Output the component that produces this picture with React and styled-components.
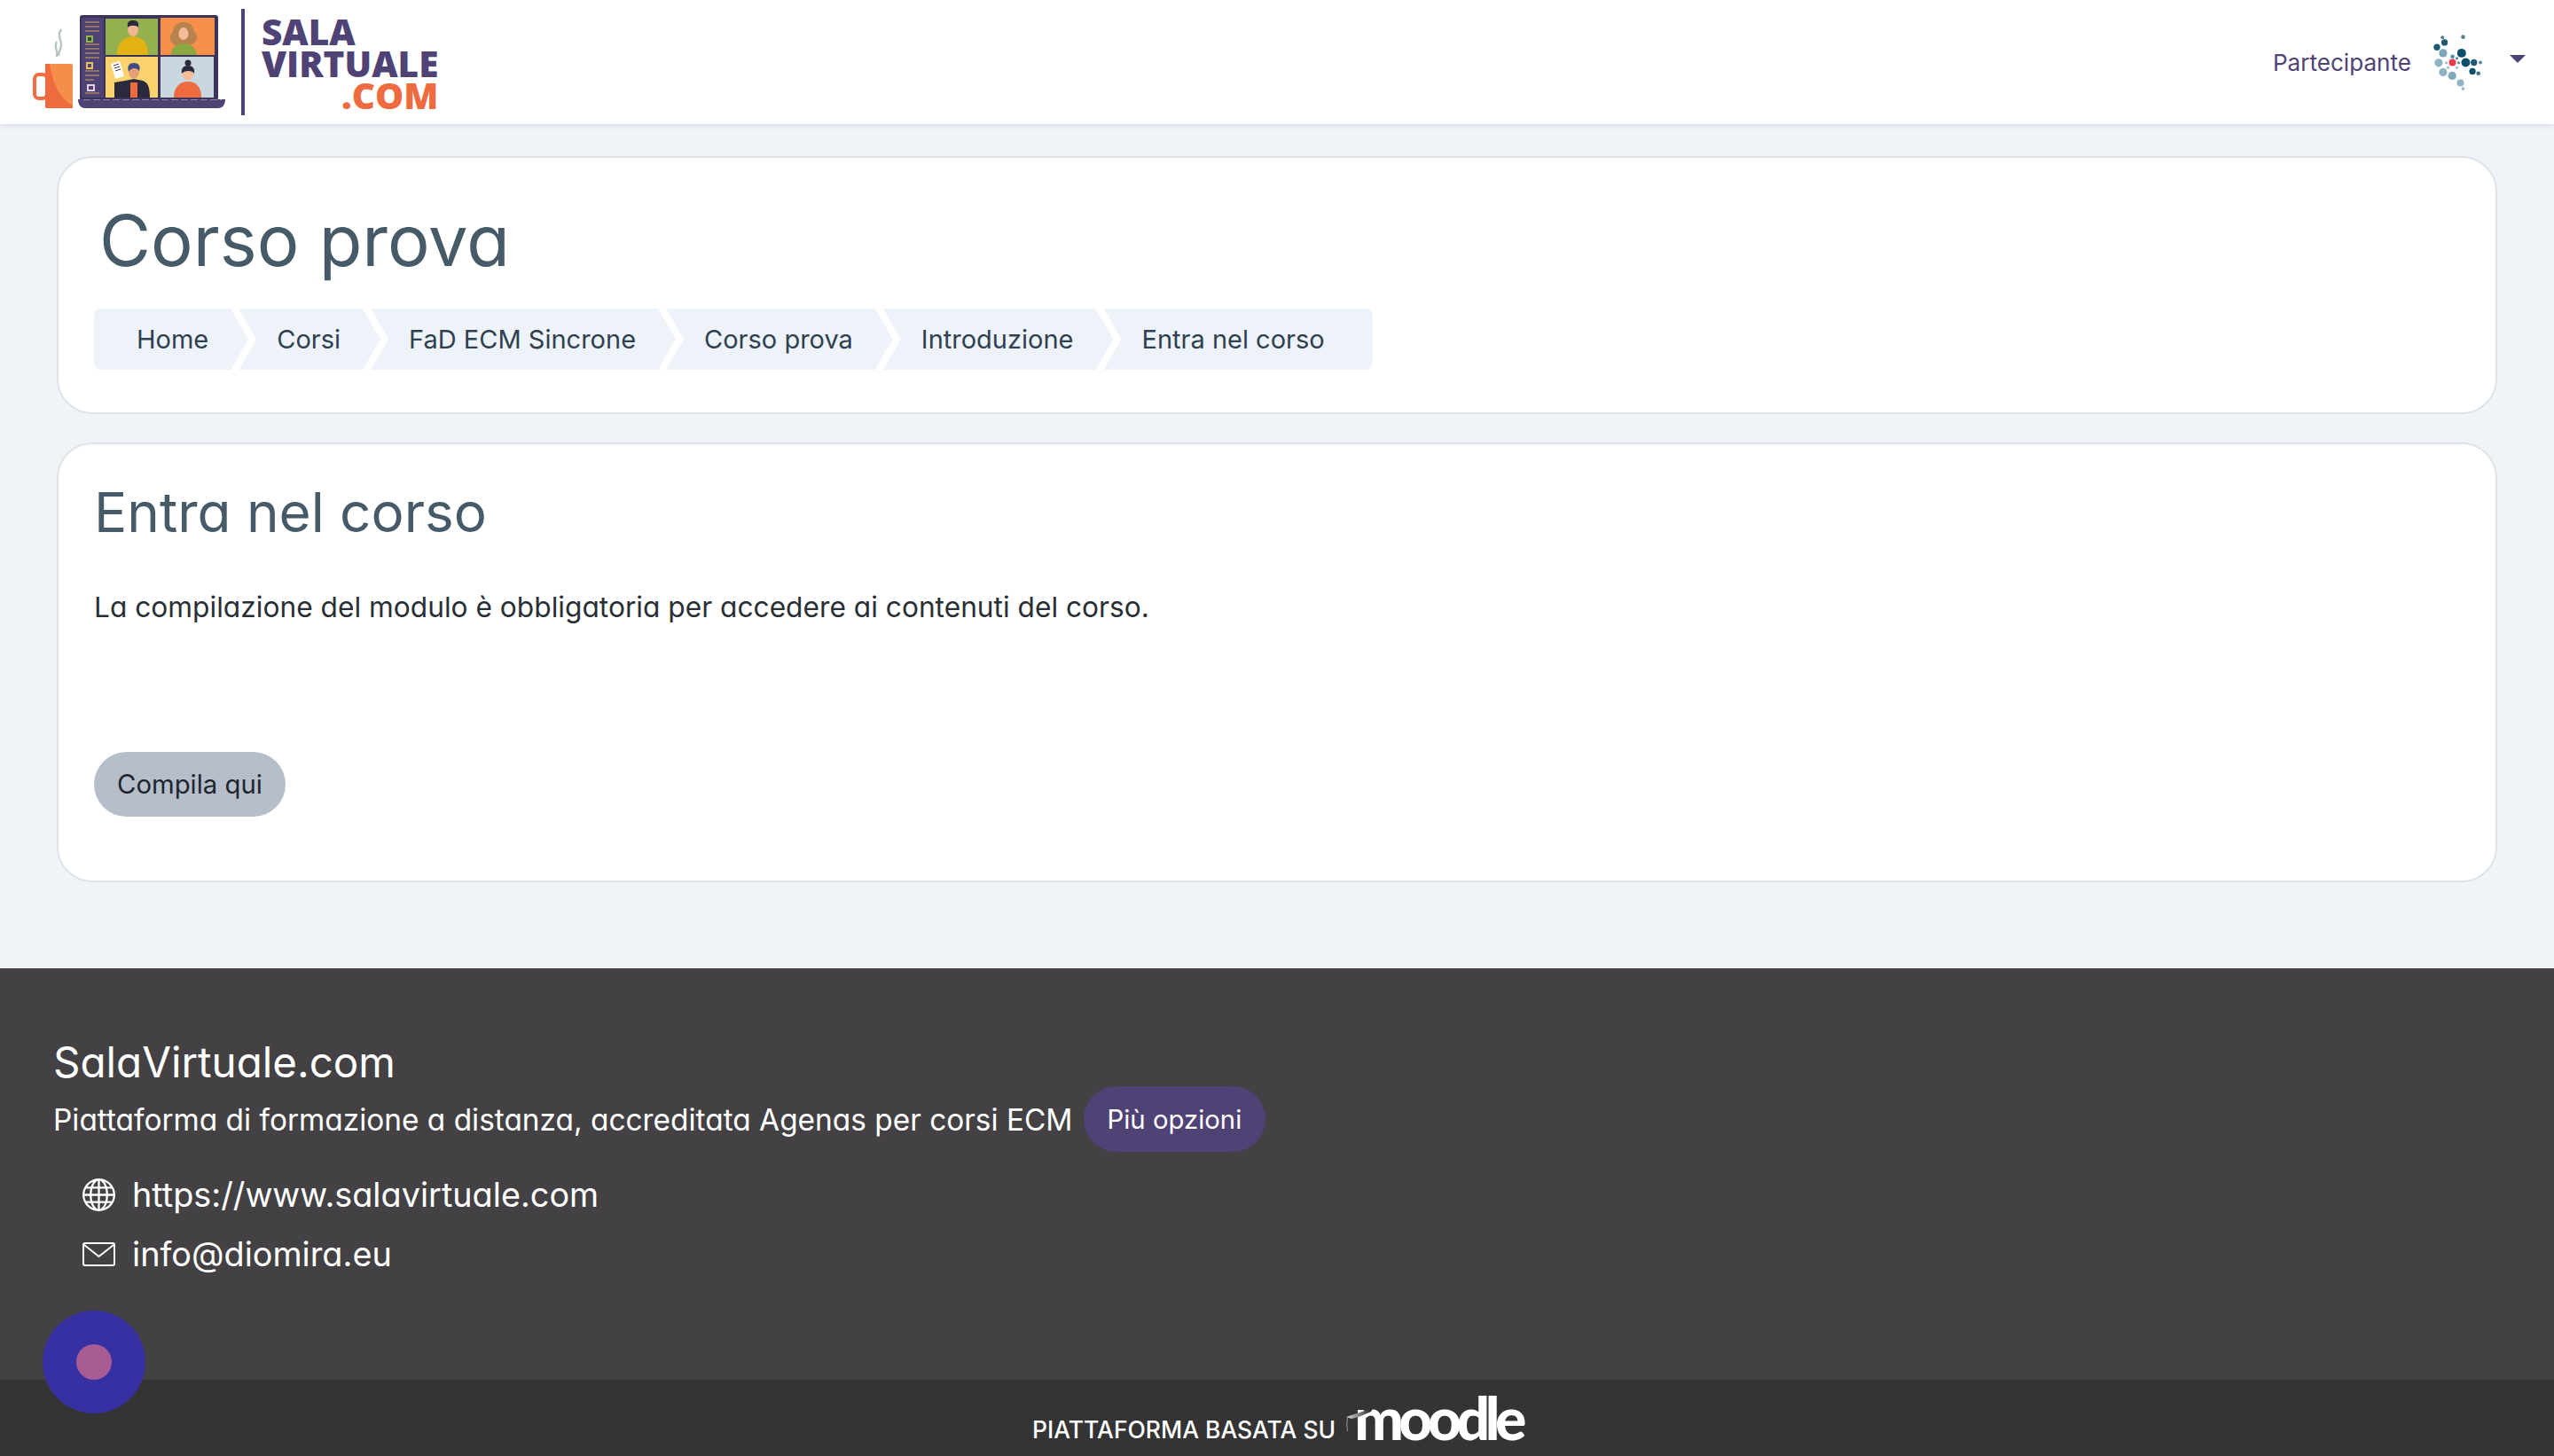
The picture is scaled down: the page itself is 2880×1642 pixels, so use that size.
import React from 'react'
import styled, { createGlobalStyle } from 'styled-components'
import { BsGlobe } from 'react-icons/bs'

const GlobalStyle = createGlobalStyle`
    * { box-sizing: border-box; }
    html, body { margin: 0; padding: 0; }
    body {
        background: #f0f4f8;
        font-family: Inter, "Noto Sans", "Liberation Sans", sans-serif;
        font-feature-settings: "cv11";
    }
`;

const Page = styled.div`
    position: relative;
    display: flex;
    flex-direction: column;
    height: 1642px;
    overflow: hidden;
`;

const Header = styled.header`
    display: flex;
    align-items: center;
    justify-content: space-between;
    flex: none;
    height: 140px;
    padding: 0 32px 0 20px;
    background: #fff;
    box-shadow: 0 2px 6px rgba(60, 70, 80, 0.12);
`;

const Brand = styled.div`
    display: flex;
    align-items: center;
`;

const Divider = styled.div`
    width: 4px;
    height: 120px;
    margin-left: 2px;
    background: #4f4274;
`;

const BrandText = styled.div`
    display: flex;
    flex-direction: column;
    align-items: flex-end;
    margin: 3px 0 0 19px;
    font-family: "Open Sans", sans-serif;
    font-feature-settings: normal;
    font-size: 40.5px;
    font-weight: 800;
    line-height: 36px;
    color: #4f4274;
`;

const BrandSala = styled.span`
    align-self: flex-start;
`;

const BrandCom = styled.span`
    color: #ee6a3f;
`;

const UserMenu = styled.div`
    display: flex;
    align-items: center;
`;

const UserName = styled.span`
    margin-right: 21px;
    font-size: 26.1px;
    font-feature-settings: normal;
    color: #4f4274;
`;

const Caret = styled.span`
    margin-left: 27px;
    margin-bottom: 8px;
    border-left: 9px solid transparent;
    border-right: 9px solid transparent;
    border-top: 9px solid #4f4274;
`;

const Main = styled.main`
    display: flex;
    flex-direction: column;
    gap: 32px;
    flex: none;
    height: 952px;
    padding: 36px 64px 0;
`;

const Card = styled.section`
    background: #fff;
    border: 2px solid #dfe4e9;
    border-radius: 40px;
    padding: ${({ $pad }) => $pad};
`;

const Title = styled.h1`
    margin: 0 0 35px 6px;
    font-size: 79.5px;
    font-weight: 400;
    line-height: 84px;
    color: #465a68;
`;

const Crumbs = styled.nav`
    display: flex;
    width: fit-content;
    height: 69px;
    border-radius: 8px;
    overflow: hidden;
`;

const Crumb = styled.span`
    display: flex;
    align-items: center;
    padding: 0 ${({ $last }) => ($last ? 54 : 45)}px 0 ${({ $first }) => ($first ? 48 : 43)}px;
    margin-left: ${({ $first }) => ($first ? 0 : -11)}px;
    background: #edf3f9;
    font-size: 29px;
    font-feature-settings: normal;
    color: #2f4050;
    clip-path: ${({ $first, $last }) => {
        if ($first) return 'polygon(0 0, calc(100% - 20px) 0, 100% 50%, calc(100% - 20px) 100%, 0 100%)'
        if ($last) return 'polygon(0 0, 100% 0, 100% 100%, 0 100%, 20px 50%)'
        return 'polygon(0 0, calc(100% - 20px) 0, 100% 50%, calc(100% - 20px) 100%, 0 100%, 20px 50%)'
    }};
`;

const Heading = styled.h2`
    margin: 0 0 48px;
    font-size: 62px;
    font-weight: 400;
    line-height: 72px;
    color: #465a68;
`;

const Lead = styled.p`
    margin: 0 0 141px;
    font-size: 31.7px;
    line-height: 45px;
    color: #2a2f36;
`;

const PillButton = styled.button`
    display: block;
    height: ${({ $height }) => $height}px;
    padding: 0 ${({ $pad }) => $pad}px;
    border: 0;
    border-radius: 40px;
    background: ${({ $bg }) => $bg};
    color: ${({ $fg }) => $fg};
    font-family: inherit;
    font-feature-settings: normal;
    font-size: 29.3px;
    white-space: nowrap;
`;

const Footer = styled.footer`
    flex: 1;
    padding: 83px 60px 0;
    background: #434143;
    color: #fff;
`;

const FooterTitle = styled.div`
    font-size: 47.5px;
    line-height: 46px;
`;

const FooterRow = styled.div`
    display: flex;
    align-items: center;
    gap: 12px;
    margin-top: 4px;
    font-size: 33.4px;
    line-height: 44px;
`;

const FooterLine = styled.span`
    padding-top: 2px;
`;

const ContactList = styled.div`
    display: flex;
    flex-direction: column;
    gap: 17px;
    margin-top: 23px;
    padding-left: 33px;
`;

const Contact = styled.div`
    display: flex;
    align-items: center;
    gap: 19px;
    height: 50px;
    font-size: 37.8px;
    svg { flex: none; }
`;

const BottomBar = styled.div`
    display: flex;
    align-items: center;
    justify-content: center;
    flex: none;
    height: 86px;
    background: #343434;
    color: #fff;
`;

const BarText = styled.span`
    margin-top: 26px;
    font-size: 26.5px;
    font-weight: 500;
`;

const MoodleMark = styled.span`
    position: relative;
    margin-left: 21px;
    font-family: Lato, Inter, sans-serif;
    font-size: 66px;
    font-weight: 900;
    line-height: 1;
    letter-spacing: -5.5px;
    font-feature-settings: normal;
    svg {
        position: absolute;
        left: -9px;
        top: 22px;
    }
`;

const ChatBubble = styled.div`
    position: absolute;
    left: 48px;
    top: 1478px;
    display: flex;
    align-items: center;
    justify-content: center;
    width: 116px;
    height: 116px;
    border-radius: 50%;
    background: #3730a3;
`;

const ChatDot = styled.span`
    width: 40px;
    height: 40px;
    border-radius: 50%;
    background: #a85c94;
`;

const LogoArt = () => (
    <svg width="250" height="140" viewBox="0 0 250 140">
        <g fill="none" stroke="#b9c2c4" strokeWidth="2.4">
            <path d="M49 33c-6 9 3 13-1 22-1 3-2 5-2 8" />
            <path d="M44 47c-4 6 2 9 0 17" />
        </g>
        <rect x="19" y="84" width="14" height="27" rx="5" fill="none" stroke="#ef6f45" strokeWidth="4" />
        <rect x="31" y="72" width="31" height="50" rx="2" fill="#f58e4a" />
        <path d="M31 72h5c3 22 12 40 26 47v3H33a2 2 0 0 1-2-2z" fill="#ee6a3f" />
        <rect x="70" y="17" width="156" height="96" rx="3" fill="#3b3358" />
        <rect x="72" y="20" width="25" height="90" fill="#4f4274" />
        <g stroke="#a8875f" strokeWidth="1.5">
            <path d="M76 25h16M76 30h16M76 35h16M76 50h16M76 55h16M76 60h16M76 65h16M76 80h16M76 85h16M76 90h10M76 105h16" />
        </g>
        <rect x="78" y="41" width="6" height="6" fill="#2f4a3a" stroke="#95b04f" strokeWidth="2" />
        <rect x="78" y="71" width="6" height="6" fill="#4f4274" stroke="#e7c45f" strokeWidth="2" />
        <rect x="79" y="96" width="7" height="6" fill="#4f4274" stroke="#e5cfe2" strokeWidth="2" />

        <rect x="99" y="21" width="59" height="41" fill="#95b04f" />
        <path d="M112 62c0-13 6-20 18-21 12 1 17 8 17 21z" fill="#e4b313" />
        <ellipse cx="130" cy="33" rx="6" ry="8" fill="#f0b78f" />
        <path d="M124 31c-1-7 2-8 6-8s7 1 6 8c-2-3-9-3-12 0z" fill="#2b2a3d" />

        <rect x="161" y="20" width="61" height="42" fill="#f58f49" />
        <path d="M187 25c8 0 11 5 12 11 5 4 4 10-1 13-3 3-20 5-22 1-5-3-6-10-1-14 0-6 5-11 12-11z" fill="#b8824e" />
        <ellipse cx="187" cy="38" rx="5.5" ry="7" fill="#f3bd9a" />
        <path d="M173 62c0-8 6-13 14-13s14 5 15 13z" fill="#8aa83f" />

        <rect x="99" y="64" width="59" height="46" fill="#fbd36d" />
        <path d="M109 110V93l12-2 10-2 10 2c6 2 8 8 8 19z" fill="#2b2a3d" />
        <rect x="127" y="93" width="8" height="17" fill="#ee6a3f" />
        <ellipse cx="131" cy="81" rx="6" ry="7.5" fill="#e59f76" />
        <path d="M125 81c-2-7 1-10 6-10s8 3 6 9c-3-4-9-4-12 1z" fill="#3e4a80" />
        <path d="M105 72l10-3 5 17-10 3z" fill="#fff" />
        <path d="M108 74l6-2M109 77l6-2M110 80l6-2" stroke="#3b3358" strokeWidth="1" />

        <rect x="161" y="64" width="60" height="46" fill="#c9d7de" />
        <path d="M176 110c0-11 6-18 16-18s15 7 15 18z" fill="#ee6a3f" />
        <ellipse cx="192" cy="83" rx="6.5" ry="7.5" fill="#f3bd9a" />
        <path d="M185 83c-1-6 2-9 7-9s8 3 7 9c-2-4-11-4-14 0z" fill="#2b2a3d" />
        <circle cx="192" cy="71" r="3.5" fill="#2b2a3d" />

        <path d="M68 112h166c0 6-3 10-8 10H76c-5 0-8-4-8-10z" fill="#4f4274" />
        <path d="M74 112.5h156" stroke="#8c85a8" strokeWidth="1" strokeDasharray="8 3" />
    </svg>
)

const avatarDots = [
    [703, 130, 6, '#5b7f8e'], [710, 147, 11, '#1f5a74'], [773, 128, 7, '#5b7f8e'], [684, 163, 11, '#1f5a74'],
    [705, 183, 14, '#7fa9bb'], [768, 183, 15, '#0f4f6e'], [737, 195, 7, '#5b8ca3'], [752, 201, 5, '#5b8ca3'],
    [690, 216, 14, '#8fb4c3'], [716, 216, 5, '#a2c1cd'], [758, 216, 5, '#5b8ca3'], [782, 215, 15, '#0f4f6e'],
    [810, 215, 11, '#1f5a74'], [832, 215, 6, '#5b8ca3'], [722, 232, 5, '#a2c1cd'], [752, 232, 5, '#a2c1cd'],
    [705, 248, 14, '#8fb4c3'], [736, 260, 14, '#7fa9bb'], [805, 245, 11, '#0f4f6e'], [825, 252, 7, '#3a6f86'],
    [764, 284, 12, '#8fb4c3'], [773, 304, 6, '#a2c1cd'], [737, 215, 12, '#ee3a48'],
]

const Avatar = () => (
    <svg width="63" height="67" viewBox="660 115 190 200">
        {avatarDots.map(([cx, cy, r, fill]) => (
            <circle key={`${cx}-${cy}`} cx={cx} cy={cy} r={r} fill={fill} />
        ))}
    </svg>
)

const MailIcon = () => (
    <svg width="37" height="37" viewBox="0 0 37 37" fill="none" stroke="#fff" strokeWidth="2">
        <rect x="1" y="6" width="35" height="25" rx="2" />
        <path d="M2 8l16.5 13L35 8" />
    </svg>
)

const crumbs = ['Home', 'Corsi', 'FaD ECM Sincrone', 'Corso prova', 'Introduzione', 'Entra nel corso']

const App = () => {
    return (
        <>
            <GlobalStyle />
            <Page>
                <Header>
                    <Brand>
                        <LogoArt />
                        <Divider />
                        <BrandText>
                            <BrandSala>SALA</BrandSala>
                            <span>VIRTUALE</span>
                            <BrandCom>.COM</BrandCom>
                        </BrandText>
                    </Brand>
                    <UserMenu>
                        <UserName>Partecipante</UserName>
                        <Avatar />
                        <Caret />
                    </UserMenu>
                </Header>
                <Main>
                    <Card $pad="51px 40px 48px">
                        <Title>Corso prova</Title>
                        <Crumbs>
                            {crumbs.map((c, i) => (
                                <Crumb key={c} $first={i === 0} $last={i === crumbs.length - 1}>{c}</Crumb>
                            ))}
                        </Crumbs>
                    </Card>
                    <Card $pad="41px 40px 72px">
                        <Heading>Entra nel corso</Heading>
                        <Lead>La compilazione del modulo è obbligatoria per accedere ai contenuti del corso.</Lead>
                        <PillButton $height={73} $pad={26} $bg="#b6bfc9" $fg="#1d2530">Compila qui</PillButton>
                    </Card>
                </Main>
                <Footer>
                    <FooterTitle>SalaVirtuale.com</FooterTitle>
                    <FooterRow>
                        <FooterLine>Piattaforma di formazione a distanza, accreditata Agenas per corsi ECM</FooterLine>
                        <PillButton $height={74} $pad={27} $bg="#4f4274" $fg="#fff">Più opzioni</PillButton>
                    </FooterRow>
                    <ContactList>
                        <Contact><BsGlobe size={37} />https://www.salavirtuale.com</Contact>
                        <Contact><MailIcon />info@diomira.eu</Contact>
                    </ContactList>
                </Footer>
                <BottomBar>
                    <BarText>PIATTAFORMA BASATA SU</BarText>
                    <MoodleMark>
                        moodle
                        <svg width="32" height="28" viewBox="0 0 32 28">
                            <defs>
                                <linearGradient id="capShade" x1="0" x2="1">
                                    <stop offset="0" stopColor="#ddd" />
                                    <stop offset="1" stopColor="#1c1c1c" />
                                </linearGradient>
                            </defs>
                            <path d="M0 10 L30 0 L28 4 L14 10 L6 12z" fill="url(#capShade)" />
                            <path d="M1.5 11 Q0 18 1.5 26" fill="none" stroke="#999" strokeWidth="1" />
                        </svg>
                    </MoodleMark>
                </BottomBar>
                <ChatBubble><ChatDot /></ChatBubble>
            </Page>
        </>
    )
}

export default App
